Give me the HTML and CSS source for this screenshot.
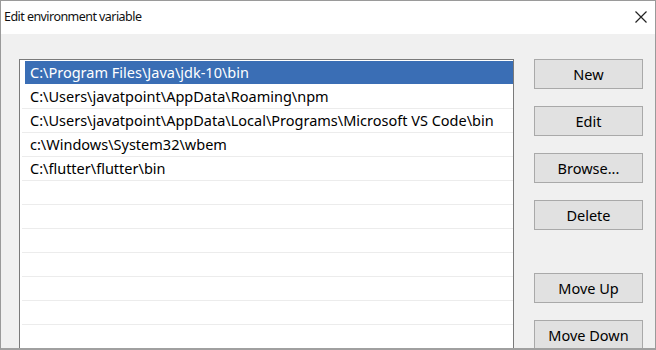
FILE: index.html
```html
<!DOCTYPE html>
<html>
<head>
<meta charset="utf-8">
<link rel="stylesheet" href="styles.css">
</head>
<body>
<div class="window">
  <div class="titlebar">
    <span class="title">Edit environment variable</span>
    <svg class="close" width="12" height="12" viewBox="0 0 12 12"><path d="M0.5 0.5 L11.5 11.5 M11.5 0.5 L0.5 11.5" stroke="#222" stroke-width="1.2" fill="none"/></svg>
  </div>
  <div class="content">
    <div class="list">
      <div class="row selected"><span class="sel">C:\Program Files\Java\jdk-10\bin</span></div>
      <div class="row">C:\Users\javatpoint\AppData\Roaming\npm</div>
      <div class="row">C:\Users\javatpoint\AppData\Local\Programs\Microsoft VS Code\bin</div>
      <div class="row">c:\Windows\System32\wbem</div>
      <div class="row">C:\flutter\flutter\bin</div>
      <div class="row"></div>
      <div class="row"></div>
      <div class="row"></div>
      <div class="row"></div>
      <div class="row"></div>
      <div class="row"></div>
      <div class="row"></div>
    </div>
    <div class="buttons">
      <button class="btn">New</button>
      <button class="btn">Edit</button>
      <button class="btn">Browse...</button>
      <button class="btn">Delete</button>
      <button class="btn spaced">Move Up</button>
      <button class="btn">Move Down</button>
    </div>
  </div>
</div>
</body>
</html>
```
FILE: styles.css
```css
html, body {
  margin: 0;
  padding: 0;
  width: 656px;
  height: 350px;
  overflow: hidden;
  background: #f0f0f0;
}
.window {
  width: 656px;
  height: 350px;
  box-sizing: border-box;
  border: 1px solid #9a9a9a;
  border-bottom: 2px solid #a0a0a0;
  background: #f0f0f0;
  font-family: "Noto Sans", "Open Sans", sans-serif;
  color: #000;
  overflow: hidden;
}
.titlebar {
  height: 33px;
  background: #fff;
  display: flex;
  align-items: center;
  justify-content: space-between;
  padding: 0 8px 0 3px;
  font-size: 12.5px;
  letter-spacing: -0.55px;
}
.title {
  color: #111;
  position: relative;
  top: -1px;
}
.close {
  position: relative;
  top: -1px;
}
.content {
  display: flex;
  padding: 25px 0 0 18px;
}
.list {
  width: 495px;
  height: 300px;
  box-sizing: border-box;
  border: 1px solid #7a7a7a;
  border-bottom: none;
  background: #fff;
  padding: 1px 0 0 2px;
  font-size: 14.5px;
}
.row {
  height: 23px;
  border-bottom: 1px solid #ececec;
  line-height: 23px;
  padding-left: 8px;
  white-space: nowrap;
}
.row.selected {
  padding-left: 3px;
  border-bottom-color: #fff;
}
.sel {
  display: block;
  background: #3a6eb5;
  color: #fff;
  padding-left: 5px;
}
.buttons {
  display: flex;
  flex-direction: column;
  gap: 17px;
  margin-left: 20px;
}
.btn {
  width: 109px;
  height: 30px;
  box-sizing: border-box;
  border: 1px solid #a9a9a9;
  background: #e1e1e1;
  font-family: "Noto Sans", "Open Sans", sans-serif;
  font-size: 14.5px;
  color: #000;
  padding: 0;
}
.btn.spaced {
  margin-top: 26px;
}
```
